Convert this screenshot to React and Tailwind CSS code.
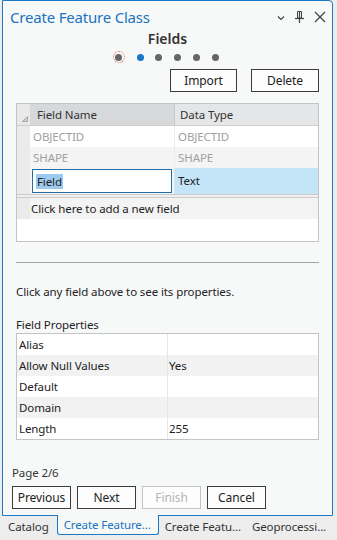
import React from "react";

const fieldRows = [
  { name: "OBJECTID", type: "OBJECTID", bg: "bg-white" },
  { name: "SHAPE", type: "SHAPE", bg: "bg-[#f4f4f4]" },
];

const props = [
  { label: "Alias", value: "" },
  { label: "Allow Null Values", value: "Yes" },
  { label: "Default", value: "" },
  { label: "Domain", value: "" },
  { label: "Length", value: "255" },
];

const Btn = ({ children, disabled, className = "" }) => (
  <button
    className={
      "h-[23px] border bg-[#fdfdfd] text-[12px] leading-none " +
      (disabled ? "border-[#c4c4c4] text-[#b4b4b4] " : "border-[#3c3c3c] text-[#222] ") +
      className
    }
  >
    {children}
  </button>
);

const TitleIcons = () => (
  <div className="flex items-center gap-[9px] text-[#444]">
    <svg width="8" height="6" viewBox="0 0 8 6" className="mt-[2px]">
      <path d="M1 1.5 L4 4.5 L7 1.5" fill="none" stroke="#444" strokeWidth="1.2" />
    </svg>
    <svg width="11" height="12" viewBox="0 0 11 12">
      <path d="M3.5 0.5 H7.5 V7 H3.5 Z" fill="none" stroke="#444" strokeWidth="1" />
      <path d="M5.5 1 V7" stroke="#444" strokeWidth="1.2" />
      <path d="M1 7.5 H10" stroke="#444" strokeWidth="1.2" />
      <path d="M5.5 7.5 V12" stroke="#444" strokeWidth="1.2" />
    </svg>
    <svg width="12" height="12" viewBox="0 0 12 12">
      <path d="M1 1 L11 11 M11 1 L1 11" stroke="#444" strokeWidth="1.3" />
    </svg>
  </div>
);

const Dots = () => (
  <div className="flex h-[18px] items-center justify-center gap-[12px] pr-[4px]">
    <span className="flex h-[12px] w-[12px] items-center justify-center rounded-full border border-dotted border-[#e06050]">
      <span className="h-[7px] w-[7px] rounded-full bg-[#666]" />
    </span>
    <span className="h-[7px] w-[7px] rounded-full bg-[#1776c8]" />
    <span className="ml-[-1px] h-[7px] w-[7px] rounded-full bg-[#666]" />
    <span className="h-[7px] w-[7px] rounded-full bg-[#666]" />
    <span className="h-[7px] w-[7px] rounded-full bg-[#666]" />
    <span className="h-[7px] w-[7px] rounded-full bg-[#666]" />
  </div>
);

export default function App() {
  return (
    <div
      className="relative h-[540px] w-[337px] overflow-hidden bg-[#ededed] text-[11.5px] tracking-[-0.1px] text-[#222]"
      style={{ fontFamily: '"Noto Sans", "Open Sans", sans-serif' }}
    >
      {/* panel */}
      <div className="ml-[2px] flex h-[516px] w-[331px] flex-col rounded-tr-[4px] border border-[#1a78c8] bg-[#f7f9f9]">
        <div className="flex h-[29px] items-center justify-between pl-[7px] pr-[6px] pt-[3px]">
          <span className="text-[15px] leading-none tracking-[-0.2px] text-[#1a73c0]">Create Feature Class</span>
          <TitleIcons />
        </div>
        <div className="h-[18px] text-center text-[14px] font-semibold leading-[18px] tracking-normal text-[#333]">Fields</div>
        <Dots />

        <div className="mt-[3px] flex justify-end gap-[14px] pr-[13px]">
          <Btn className="w-[67px]">Import</Btn>
          <Btn className="w-[68px]">Delete</Btn>
        </div>

        {/* fields grid */}
        <div className="mx-[13px] mt-[11px] flex h-[139px] flex-col border border-[#c4c4c4] bg-white">
          <div className="flex h-[22px] border-b border-[#cfcfcf]">
            <div className="flex w-[13px] items-end justify-end bg-[#e9e9e9] pb-[3px] pr-[2px]">
              <svg width="6" height="6" viewBox="0 0 6 6">
                <path d="M5.5 0.5 V5.5 H0.5 Z" fill="#cfcfcf" stroke="#9a9a9a" strokeWidth="0.8" />
              </svg>
            </div>
            <div className="flex w-[144px] items-center bg-[#d7d8da] pl-[7px] text-[#333]">Field Name</div>
            <div className="flex flex-1 items-center border-l border-[#c9c9c9] bg-[#e5e6e7] pl-[5px] text-[#333]">Data Type</div>
          </div>
          {fieldRows.map((r) => (
            <div key={r.name} className={"flex h-[21px] " + r.bg}>
              <div className="w-[13px] bg-[#ebebeb]" />
              <div className="flex w-[144px] items-center pl-[3px] text-[#a0a0a0]">{r.name}</div>
              <div className="flex flex-1 items-center border-l border-[#ececec] pl-[3px] text-[#a0a0a0]">{r.type}</div>
            </div>
          ))}
          <div className="flex h-[26px] bg-[#f4f4f4]">
            <div className="w-[13px] bg-[#ebebeb]" />
            <div className="flex w-[144px] items-center pl-[2px]">
              <div className="flex h-[24px] w-[140px] items-center border border-[#1f6fae] bg-white pl-[3px]">
                <span className="bg-[#9ccaf0] px-[1px] leading-[15px]">Field</span>
              </div>
            </div>
            <div className="flex flex-1 items-center border-l border-[#d8e8f2] bg-[#c4e4f8] pl-[3px]">Text</div>
          </div>
          <div className="h-[4px] border-y border-[#cbcbcb] bg-[#efefef]" />
          <div className="flex h-[21px] bg-[#f3f3f3]">
            <div className="w-[13px] bg-[#ebebeb]" />
            <div className="flex items-center pl-[1px]">Click here to add a new field</div>
          </div>
          <div className="flex-1 bg-white" />
        </div>

        <div className="mx-[13px] mt-[20px] h-px bg-[#a4a4a4]" />

        <div className="mt-[21px] h-[16px] pl-[13px] leading-[16px]">Click any field above to see its properties.</div>
        <div className="mt-[17px] h-[16px] pl-[13px] leading-[16px]">Field Properties</div>

        {/* properties grid */}
        <div className="mx-[13px] flex flex-col border border-[#c4c4c4] bg-white">
          {props.map((p, i) => (
            <div key={p.label} className={"flex h-[21px] " + (i % 2 ? "bg-[#f2f2f2]" : "bg-white")}>
              <div className="flex w-[150px] items-center pl-[2px]">{p.label}</div>
              <div className="flex flex-1 items-center border-l border-[#e6e6e6] pl-[1px]">{p.value}</div>
            </div>
          ))}
        </div>

        <div className="mt-[25px] h-[16px] pl-[9px] leading-[16px] text-[#333]">Page 2/6</div>
        <div className="mt-[5px] flex gap-[6px] pl-[9px]">
          <Btn className="w-[59px]">Previous</Btn>
          <Btn className="w-[59px]">Next</Btn>
          <Btn className="w-[59px]" disabled>Finish</Btn>
          <Btn className="w-[59px]">Cancel</Btn>
        </div>
      </div>

      {/* dock tabs */}
      <div className="flex items-start whitespace-nowrap text-[#333]">
        <div className="flex h-[22px] items-center pl-[8px] pr-[8px]">Catalog</div>
        <div className="mt-[-1px] flex h-[20px] w-[102px] items-center rounded-b-[3px] border-x border-b border-[#1a78c8] bg-[#f7f9f9] pl-[6px] text-[#1a73c0]">
          Create Feature...
        </div>
        <div className="flex h-[22px] items-center pl-[6px]">Create Featu...</div>
        <div className="flex h-[22px] items-center pl-[11px]">Geoprocessi...</div>
      </div>
    </div>
  );
}
